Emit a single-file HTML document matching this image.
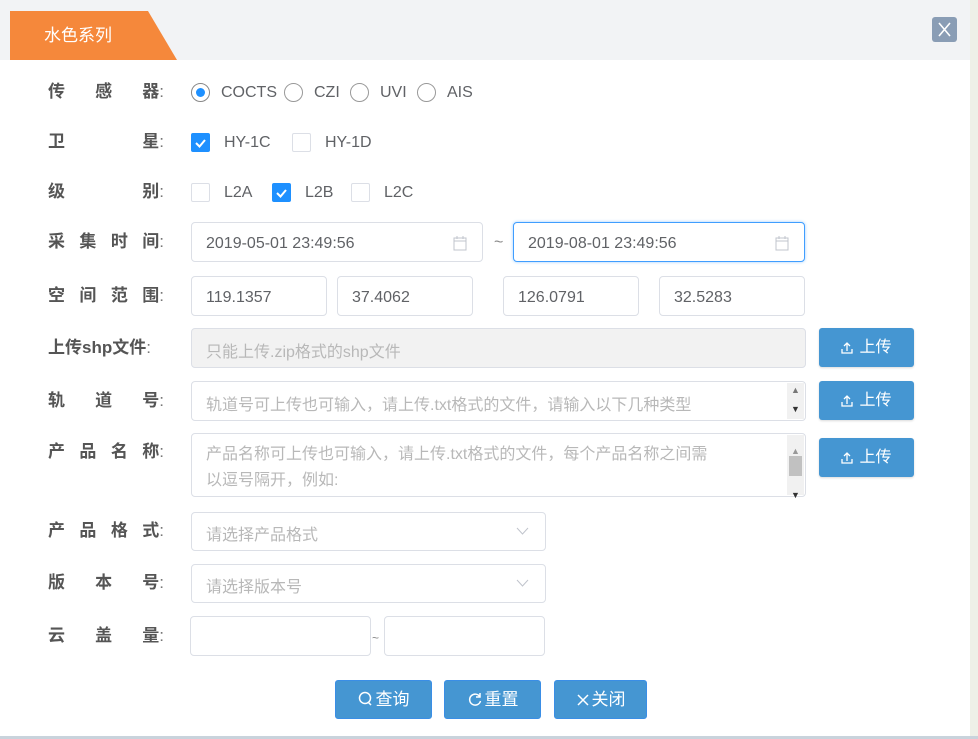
<!DOCTYPE html>
<html><head><meta charset="utf-8"><style>
*{box-sizing:border-box;margin:0;padding:0}
body{width:978px;height:739px;overflow:hidden;background:#fff;font-family:"Liberation Sans","Noto Sans CJK SC",sans-serif;position:relative}
.map{position:absolute;left:970px;top:0;width:8px;height:739px;background:#eef0e8}
.bot{position:absolute;left:0;top:736px;width:978px;height:3px;background:#c9d3dc}
.hdr{position:absolute;left:0;top:0;width:970px;height:60px;background:#f2f3f5}
.tab{position:absolute;left:10px;top:11px;width:167px;height:49px;background:#f5883b;clip-path:polygon(0 0,138px 0,167px 49px,0 49px);color:#fff;font-size:17px;line-height:49px;padding-left:34px}
.x{position:absolute;left:932px;top:17px;width:25px;height:25px;background:#8a9db5;border-radius:3px}
.lab{position:absolute;left:48px;width:116px;display:flex;justify-content:space-between;font-size:17px;font-weight:bold;color:#555;height:20px;line-height:20px}
.lab i{font-style:normal;font-weight:normal;color:#777}
.t{position:absolute;font-size:16px;color:#606266;line-height:20px}
.rad{position:absolute;width:19px;height:19px;border:1px solid #999;border-radius:50%;background:#fff}
.rad.on{border-color:#888}.rad.on:after{content:"";position:absolute;left:4px;top:4px;width:9px;height:9px;border-radius:50%;background:#1e90ff}
.cb{position:absolute;width:19px;height:19px;border:1px solid #dcdfe6;border-radius:2px;background:#fff}
.cb.on{background:#1e90ff;border-color:#1e90ff}
.in{position:absolute;border:1px solid #dcdfe6;border-radius:4px;background:#fff;font-size:16px;color:#606266;padding-left:14px;padding-top:3px;display:flex;align-items:center}
.ph{color:#b8b8b8}
.up{position:absolute;left:819px;width:95px;height:39px;background:#4596d2;border-radius:3px;color:#fff;font-size:16px;line-height:39px;text-align:center;box-shadow:0 1px 2px rgba(0,0,0,.15)}
.up svg,.btn svg{vertical-align:-2px;margin-right:6px}
.btn{position:absolute;top:680px;height:39px;background:#4596d2;border:1px solid #3a8ee6;border-radius:3px;color:#fff;font-size:17px;line-height:37px;text-align:center}
.btn svg{margin-right:2px}
.sb{position:absolute;right:1px;top:1px;bottom:1px;width:17px;background:#f1f1f1}
.arr{position:absolute;right:16px;top:13px}
.cal{position:absolute;right:15px;top:12px}
</style></head><body>
<div class="map"></div><div class="bot"></div>
<div class="hdr"></div>
<div class="tab">水色系列</div>
<div class="x"><svg width="25" height="25"><path d="M7 6L18 19M18 6L7 19" stroke="#fff" stroke-width="1.6"/></svg></div>

<div class="lab" style="top:82px"><span>传</span><span>感</span><span>器<i>:</i></span></div>
<div class="rad on" style="left:191px;top:83px"></div><div class="t" style="left:221px;top:83px">COCTS</div>
<div class="rad" style="left:284px;top:83px"></div><div class="t" style="left:314px;top:83px">CZI</div>
<div class="rad" style="left:350px;top:83px"></div><div class="t" style="left:380px;top:83px">UVI</div>
<div class="rad" style="left:417px;top:83px"></div><div class="t" style="left:447px;top:83px">AIS</div>

<div class="lab" style="top:132px"><span>卫</span><span>星<i>:</i></span></div>
<div class="cb on" style="left:191px;top:133px"><svg width="17" height="17"><path d="M4 9l3.5 3.5L13 6" stroke="#fff" stroke-width="2" fill="none"/></svg></div><div class="t" style="left:224px;top:133px">HY-1C</div>
<div class="cb" style="left:292px;top:133px"></div><div class="t" style="left:325px;top:133px">HY-1D</div>

<div class="lab" style="top:182px"><span>级</span><span>别<i>:</i></span></div>
<div class="cb" style="left:191px;top:183px"></div><div class="t" style="left:224px;top:183px">L2A</div>
<div class="cb on" style="left:272px;top:183px"><svg width="17" height="17"><path d="M4 9l3.5 3.5L13 6" stroke="#fff" stroke-width="2" fill="none"/></svg></div><div class="t" style="left:305px;top:183px">L2B</div>
<div class="cb" style="left:351px;top:183px"></div><div class="t" style="left:384px;top:183px">L2C</div>

<div class="lab" style="top:232px"><span>采</span><span>集</span><span>时</span><span>间<i>:</i></span></div>
<div class="in" style="left:191px;top:222px;width:292px;height:40px">2019-05-01 23:49:56<svg class="cal" width="14" height="16"><rect x="1" y="3" width="12" height="12" fill="none" stroke="#c0c4cc"/><path d="M1 6h12M4 1v3M10 1v3" stroke="#c0c4cc"/></svg></div>
<div class="t" style="left:494px;top:233px;color:#888">~</div>
<div class="in" style="left:513px;top:222px;width:292px;height:40px;border-color:#409eff;box-shadow:0 0 3px #a0cfff">2019-08-01 23:49:56<svg class="cal" width="14" height="16"><rect x="1" y="3" width="12" height="12" fill="none" stroke="#c0c4cc"/><path d="M1 6h12M4 1v3M10 1v3" stroke="#c0c4cc"/></svg></div>

<div class="lab" style="top:286px"><span>空</span><span>间</span><span>范</span><span>围<i>:</i></span></div>
<div class="in" style="left:191px;top:276px;width:136px;height:40px">119.1357</div>
<div class="in" style="left:337px;top:276px;width:136px;height:40px">37.4062</div>
<div class="in" style="left:503px;top:276px;width:136px;height:40px">126.0791</div>
<div class="in" style="left:659px;top:276px;width:146px;height:40px">32.5283</div>

<div class="lab" style="top:338px;justify-content:flex-start"><span>上传shp文件<i>:</i></span></div>
<div class="in ph" style="left:191px;top:328px;width:615px;height:40px;background:#f2f2f2">只能上传.zip格式的shp文件</div>
<div class="up" style="top:328px"><svg width="12" height="13"><path d="M6 10V2M3 5l3-3 3 3M1 8v4h10V8" stroke="#fff" stroke-width="1.3" fill="none"/></svg>上传</div>

<div class="lab" style="top:391px"><span>轨</span><span>道</span><span>号<i>:</i></span></div>
<div class="in ph" style="left:191px;top:381px;width:615px;height:40px">轨道号可上传也可输入，请上传.txt格式的文件，请输入以下几种类型<div class="sb"><span style="position:absolute;left:4px;top:2px;font-size:9px;color:#777">▲</span><span style="position:absolute;left:4px;top:21px;font-size:9px;color:#333">▼</span></div></div>
<div class="up" style="top:381px"><svg width="12" height="13"><path d="M6 10V2M3 5l3-3 3 3M1 8v4h10V8" stroke="#fff" stroke-width="1.3" fill="none"/></svg>上传</div>

<div class="lab" style="top:442px"><span>产</span><span>品</span><span>名</span><span>称<i>:</i></span></div>
<div class="in ph" style="left:191px;top:433px;width:615px;height:64px;align-items:flex-start;padding-top:8px;line-height:26px;padding-right:95px">产品名称可上传也可输入，请上传.txt格式的文件，每个产品名称之间需以逗号隔开，例如:<div class="sb"><span style="position:absolute;left:4px;top:3px;font-size:9px;color:#999">▲</span><div style="position:absolute;left:2px;top:21px;width:13px;height:20px;background:#c1c1c1"></div><span style="position:absolute;left:4px;top:47px;font-size:9px;color:#333">▼</span></div></div>
<div class="up" style="top:438px"><svg width="12" height="13"><path d="M6 10V2M3 5l3-3 3 3M1 8v4h10V8" stroke="#fff" stroke-width="1.3" fill="none"/></svg>上传</div>

<div class="lab" style="top:521px"><span>产</span><span>品</span><span>格</span><span>式<i>:</i></span></div>
<div class="in ph" style="left:191px;top:512px;width:355px;height:39px">请选择产品格式<svg class="arr" width="13" height="10"><path d="M1 2l5.5 6L12 2" stroke="#c0c4cc" fill="none"/></svg></div>
<div class="lab" style="top:573px"><span>版</span><span>本</span><span>号<i>:</i></span></div>
<div class="in ph" style="left:191px;top:564px;width:355px;height:39px">请选择版本号<svg class="arr" width="13" height="10"><path d="M1 2l5.5 6L12 2" stroke="#c0c4cc" fill="none"/></svg></div>

<div class="lab" style="top:626px"><span>云</span><span>盖</span><span>量<i>:</i></span></div>
<div class="in" style="left:190px;top:616px;width:181px;height:40px"></div>
<div class="t" style="left:372px;top:628px;font-size:12px;color:#888">~</div>
<div class="in" style="left:384px;top:616px;width:161px;height:40px"></div>

<div class="btn" style="left:335px;width:97px"><svg width="16" height="16"><circle cx="7" cy="7" r="5.5" stroke="#fff" stroke-width="1.5" fill="none"/><path d="M10 11l3 3" stroke="#fff" stroke-width="1.5"/></svg>查询</div>
<div class="btn" style="left:444px;width:97px"><svg width="16" height="16"><path d="M13 6A5.5 5.5 0 1 0 13.5 10M13 2v4h-4" stroke="#fff" stroke-width="1.5" fill="none"/></svg>重置</div>
<div class="btn" style="left:554px;width:93px"><svg width="14" height="14"><path d="M2 2l10 10M12 2L2 12" stroke="#fff" stroke-width="1.5"/></svg>关闭</div>
</body></html>
